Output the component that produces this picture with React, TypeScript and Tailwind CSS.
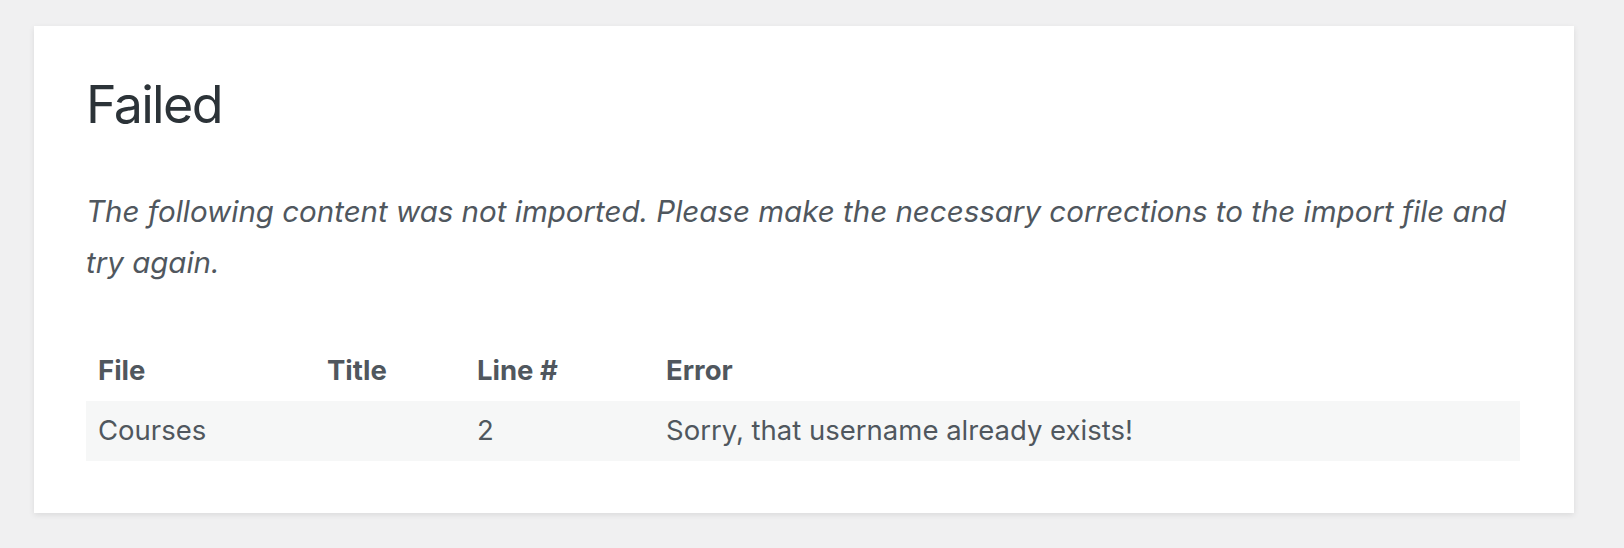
import React from "react";

export default function App() {
  return (
    <div
      className="min-h-[548px] w-full bg-[#f0f0f1] pt-[26px] pl-[34px] pr-[50px] pb-[36px]"
      style={{ fontFamily: "Inter, 'Noto Sans', sans-serif" }}
    >
      <div className="w-[1540px] bg-white shadow-[0_2px_6px_rgba(0,0,0,0.09)] pt-[48px] pb-[52px] pl-[52px] pr-[54px]">
        <h2 className="text-[52px] leading-[62px] font-normal text-[#2c3338] tracking-[-1.7px]">Failed</h2>
        <p className="mt-[50px] text-[29.5px] leading-[51px] italic text-[#50575e]">
          The following content was not imported. Please make the necessary corrections to the import file and try again.
        </p>
        <table className="mt-[53px] w-full border-collapse text-[27.5px] leading-[36px] text-[#50575e]">
          <thead>
            <tr>
              <th className="w-[229px] pl-[12px] pt-[11px] pb-[13px] text-left font-bold">File</th>
              <th className="w-[150px] pl-[12px] pt-[11px] pb-[13px] text-left font-bold">Title</th>
              <th className="w-[189px] pl-[12px] pt-[11px] pb-[13px] text-left font-bold">Line #</th>
              <th className="pl-[12px] pt-[11px] pb-[13px] text-left font-bold">Error</th>
            </tr>
          </thead>
          <tbody>
            <tr className="bg-[#f6f7f7]">
              <td className="pl-[12px] pt-[11px] pb-[13px]">Courses</td>
              <td className="pl-[12px] pt-[11px] pb-[13px]"></td>
              <td className="pl-[12px] pt-[11px] pb-[13px]">2</td>
              <td className="pl-[12px] pt-[11px] pb-[13px]">Sorry, that username already exists!</td>
            </tr>
          </tbody>
        </table>
      </div>
    </div>
  );
}
